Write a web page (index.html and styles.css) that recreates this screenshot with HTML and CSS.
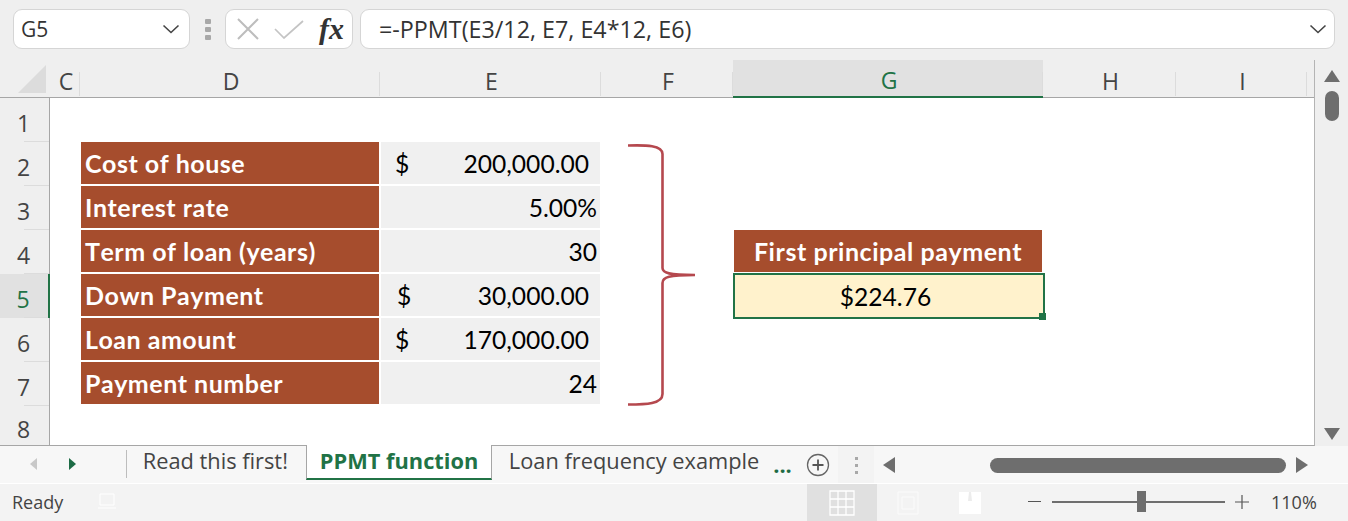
FILE: index.html
```html
<!DOCTYPE html>
<html lang="en">
<head>
<meta charset="utf-8">
<title>PPMT function</title>
<link rel="stylesheet" href="styles.css">
</head>
<body>
<div class="app">
  <header class="formula-bar">
    <div class="box name-box"><span>G5</span>
      <svg class="chev" width="18" height="10" viewBox="0 0 18 10"><path d="M1.500 1.500 9 8.500l7.500-7" fill="none" stroke="#444" stroke-width="1.600"/></svg>
    </div>
    <div class="grip"><i></i><i></i><i></i></div>
    <div class="box fx-box">
      <svg width="24" height="24" viewBox="0 0 24 24"><path d="M2 2l20 20M22 2 2 22" fill="none" stroke="#bdbdbd" stroke-width="2"/></svg>
      <svg width="30" height="20" viewBox="0 0 30 20"><path d="M1 10l9 9L29 2" fill="none" stroke="#c4c4c4" stroke-width="1.700"/></svg>
      <span class="fx">fx</span>
    </div>
    <div class="box formula-box"><span>=-PPMT(E3/12, E7, E4*12, E6)</span>
      <svg class="chev" width="18" height="10" viewBox="0 0 18 10"><path d="M1.500 1.500 9 8.500l7.500-7" fill="none" stroke="#444" stroke-width="1.600"/></svg>
    </div>
  </header>

  <section class="sheet-wrap">
    <div class="sheet">
      <div class="corner"><svg width="28" height="28" viewBox="0 0 28 28"><path d="M28 0V28H0Z" fill="#dcdcdc"/></svg></div>
      <div class="ch">C</div>
      <div class="ch">D</div>
      <div class="ch">E</div>
      <div class="ch">F</div>
      <div class="ch ch-active">G</div>
      <div class="ch">H</div>
      <div class="ch">I</div>
      <div class="ch ch-rest"></div>

      <div class="rh r1">1</div>
      <div class="rh r2">2</div>
      <div class="rh r3">3</div>
      <div class="rh r4">4</div>
      <div class="rh rh-active r5">5</div>
      <div class="rh r6">6</div>
      <div class="rh r7">7</div>
      <div class="rh r8">8</div>

      <div class="label r2">Cost of house</div>
      <div class="value r2"><span class="cur">$</span><span>200,000.00</span></div>
      <div class="label r3">Interest rate</div>
      <div class="value plain r3">5.00%</div>
      <div class="label r4">Term of loan (years)</div>
      <div class="value plain r4">30</div>
      <div class="label r5">Down Payment</div>
      <div class="value r5"><span class="cur cur-alt">$</span><span>30,000.00</span></div>
      <div class="label r6">Loan amount</div>
      <div class="value r6"><span class="cur">$</span><span>170,000.00</span></div>
      <div class="label r7">Payment number</div>
      <div class="value plain r7">24</div>

      <svg class="brace" width="132" height="264" viewBox="0 0 132 264"><path d="M27 3.500C45 3 61.500 3 61.500 12V126C61.500 131 68 133 94 133 68 133 61.500 135 61.500 141V252C61.500 262 45 262.500 27 262.500" fill="none" stroke="#b5484e" stroke-width="2.600"/></svg>

      <div class="result-head r4">First principal payment</div>
      <div class="result r5">$224.76<i class="handle"></i></div>
    </div>
    <aside class="vscroll">
      <svg width="16" height="12" viewBox="0 0 16 12"><path d="M8 0 16 12H0Z" fill="#6e6e6e"/></svg>
      <div class="vthumb"></div>
      <svg class="vdown" width="16" height="12" viewBox="0 0 16 12"><path d="M8 12 16 0H0Z" fill="#6e6e6e"/></svg>
    </aside>
  </section>

  <nav class="tabs">
    <div class="tab-nav">
      <svg width="7" height="12" viewBox="0 0 7 12"><path d="M7 0V12L0 6Z" fill="#c8c8c8"/></svg>
      <svg width="7" height="12" viewBox="0 0 7 12"><path d="M0 0V12L7 6Z" fill="#1d6b45"/></svg>
    </div>
    <div class="tab tab-first">Read this first!</div>
    <div class="tab tab-active">PPMT function</div>
    <div class="tab tab-last">Loan frequency example</div>
    <div class="more">...</div>
    <svg class="add" width="24" height="24" viewBox="0 0 24 24"><circle cx="12" cy="12" r="10.500" fill="none" stroke="#666" stroke-width="1.300"/><path d="M12 6.500v11M6.500 12h11" stroke="#555" stroke-width="1.800"/></svg>
    <div class="tab-grip"><i></i><i></i><i></i></div>
    <div class="hscroll">
      <svg width="12" height="16" viewBox="0 0 12 16"><path d="M0 8 12 0V16Z" fill="#6e6e6e"/></svg>
      <div class="hthumb"></div>
      <svg width="12" height="16" viewBox="0 0 12 16"><path d="M12 8 0 0V16Z" fill="#6e6e6e"/></svg>
    </div>
  </nav>

  <footer class="status">
    <span class="ready">Ready</span>
    <svg class="macro" width="20" height="18" viewBox="0 0 20 18"><path d="M3 1h14v11H3zM1 15h18" fill="none" stroke="#fff" stroke-width="1"/></svg>
    <div class="views">
      <div class="view view-on"><svg width="26" height="26" viewBox="0 0 26 26"><path d="M1 1h24v24H1zM9 1v24M17 1v24M1 9h24M1 17h24" fill="none" stroke="#fff" stroke-width="1.300"/></svg></div>
      <div class="view"><svg width="22" height="24" viewBox="0 0 22 24"><path d="M1 1h20v22H1zM5 6h12v12H5z" fill="none" stroke="#fbfbfb" stroke-width="1"/></svg></div>
      <div class="view"><svg width="24" height="24" viewBox="0 0 24 24"><path d="M1 1h22v22H1z" fill="#fff"/><path d="M11 1h2l1 9h-4z" fill="#ececec"/></svg></div>
    </div>
    <div class="zoom">
      <span class="minus"></span>
      <div class="track"><i class="thumb"></i></div>
      <svg width="14" height="14" viewBox="0 0 14 14"><path d="M7 0v14M0 7h14" stroke="#555" stroke-width="1.200"/></svg>
      <span class="pct">110%</span>
    </div>
  </footer>
</div>
</body>
</html>
```
FILE: styles.css
```css
* { box-sizing: border-box; }
html, body { margin: 0; height: 100%; }
body { background: #efefef; color: #333; font-family: "Open Sans", "Noto Sans", sans-serif; overflow: hidden; }
.app { width: 1348px; height: 521px; display: flex; flex-direction: column; overflow: hidden; }

/* formula bar */
.formula-bar { height: 60px; flex: none; display: flex; align-items: flex-start; padding: 9px 13px 0; }
.box { height: 40px; background: #fff; border: 1px solid #d5d5d5; border-radius: 9px; display: flex; align-items: center; color: #333; }
.name-box { width: 177px; justify-content: space-between; padding: 0 9px 0 7px; font-size: 21px; }
.grip { width: 35px; height: 40px; display: flex; flex-direction: column; align-items: center; justify-content: center; gap: 3px; }
.grip i { width: 6px; height: 5px; background: #a8a8a8; border-radius: 1px; }
.fx-box { width: 128px; padding: 0 0 0 10px; gap: 14px; }
.fx { font: italic bold 30px "Liberation Serif", serif; color: #333; margin-left: 1px; }
.formula-box { flex: 1; margin-left: 7px; justify-content: space-between; padding: 0 7px 0 18px; font-size: 23.300px; }

/* sheet */
.sheet-wrap { flex: none; height: 386px; display: flex; }
.sheet { width: 1315px; height: 386px; display: grid; grid-template-columns: 50px 30px 300px 221px 132px 310px 133px 131px 1fr; grid-template-rows: 38px repeat(7, 44px) 40px; background: linear-gradient(#efefef 38px, #fff 38px); border-right: 1px solid #b4b4b4; border-bottom: 1px solid #a6a6a6; overflow: hidden; }
.corner { display: flex; align-items: flex-end; justify-content: flex-end; padding: 0 4px 4px 0; border-bottom: 1px solid #a6a6a6; }
.ch { display: flex; align-items: center; justify-content: center; font-size: 23px; color: #444; border-bottom: 1px solid #a6a6a6; position: relative; padding: 4px 0 0 2px; }
.ch::after { content: ""; position: absolute; right: 0; top: 12px; bottom: 1px; width: 1px; background: #dcdcdc; }
.ch-rest::after { display: none; }
.ch-active { background: #e1e1e1; color: #217346; border-bottom: 2px solid #217346; }
.rh { grid-column: 1; display: flex; align-items: center; justify-content: center; font-size: 23px; color: #444; background: #efefef; border-right: 1px solid #a6a6a6; padding: 5px 2px 0 0; position: relative; }
.rh::after { content: ""; position: absolute; left: 24px; right: 0; bottom: 0; height: 1px; background: #dcdcdc; }
.rh-active { background: #e1e1e1; color: #217346; border-right: 2px solid #217346; }
.r1 { grid-row: 2; } .r2 { grid-row: 3; } .r3 { grid-row: 4; } .r4 { grid-row: 5; }
.r5 { grid-row: 6; } .r6 { grid-row: 7; } .r7 { grid-row: 8; } .r8 { grid-row: 9; }

.label { grid-column: 3; background: #a64d2d; color: #fff; font: 700 25px "Lato", sans-serif; font-kerning: none; letter-spacing: .5px; display: flex; align-items: center; padding-left: 4px; margin: 0 1px 2px 1px; }
.value { grid-column: 4; background: #f0f0f0; color: #000; font: 400 24.600px "Lato", sans-serif; display: flex; align-items: center; justify-content: space-between; padding: 0 11px 0 14px; margin: 0 1px 2px 1px; }
.cur-alt { margin-left: 2px; }
.plain { justify-content: flex-end; padding-right: 3px; }
.brace { grid-column: 5; grid-row: 3 / 9; display: block; }
.result-head { grid-column: 6; background: #a64d2d; color: #fff; font: 700 25px "Lato", sans-serif; font-kerning: none; letter-spacing: .55px; display: flex; align-items: center; justify-content: center; margin: 0 1px 2px 1px; }
.result { grid-column: 6; background: #fff2cc; color: #000; font: 400 24.600px "Lato", sans-serif; border: 2px solid #217346; display: flex; align-items: center; justify-content: center; margin: -1px -2px -1px 0; position: relative; padding-right: 7px; }
.handle { position: absolute; right: -3px; bottom: -3px; width: 7px; height: 7px; background: #217346; }

/* scrollbar */
.vscroll { flex: 1; display: flex; flex-direction: column; align-items: center; padding: 10px 0 6px; }
.vthumb { width: 14px; height: 30px; margin-top: 9px; border-radius: 7px; background: #6e6e6e; }
.vdown { margin-top: auto; }

/* tabs */
.tabs { flex: none; height: 38px; background: #f7f7f7; border-bottom: 1px solid #fff; display: flex; align-items: stretch; font-size: 21.800px; }
.tab-nav { width: 126px; display: flex; align-items: center; gap: 32px; padding: 0 0 2px 30px; }
.tab { display: flex; align-items: center; color: #444; padding-bottom: 8px; }
.tab-first { width: 181px; padding-left: 17px; position: relative; }
.tab-first::before { content: ""; position: absolute; left: 0; top: 4px; bottom: 5px; width: 1px; background: #bdbdbd; }
.tab-active { width: 186px; background: #fff; color: #217346; font-weight: 700; justify-content: center; height: 35px; margin-top: -1px; position: relative; border-bottom: 2px solid #217346; border-right: 1px solid #a6a6a6; border-left: 1px solid #a6a6a6; padding-bottom: 3px; }
.tab-last { width: 277px; padding-left: 17px; }
.more { color: #1d6b45; font-weight: 700; width: 38px; padding-left: 5px; display: flex; align-items: center; }
.add { align-self: center; flex: none; }
.tab-grip { width: 36px; margin-left: 8px; background: #f3f3f3; display: flex; flex-direction: column; align-items: center; justify-content: center; gap: 4px; padding-top: 2px; }
.tab-grip i { width: 3px; height: 3px; background: #a8a8a8; }
.hscroll { flex: 1; display: flex; align-items: center; padding: 1px 40px 0 9px; }
.hthumb { width: 296px; height: 15px; border-radius: 8px; background: #6e6e6e; margin: 0 10px 0 95px; }

/* status */
.status { flex: 1; background: #f3f3f3; display: flex; align-items: center; font-size: 18px; color: #444; padding-bottom: 2px; }
.ready { margin-left: 12px; width: 85px; }
.macro { flex: none; }
.views { display: flex; align-self: stretch; margin: 0 0 -2px 690px; }
.view { width: 70px; display: flex; align-items: center; justify-content: center; }
.view-on { background: #e0e0e0; }
.view + .view { width: 62px; }
.zoom { display: flex; align-items: center; margin-left: 27px; }
.minus { width: 13px; height: 1px; background: #555; }
.track { width: 173px; height: 2px; background: #6e6e6e; margin: 0 10px 0 11px; position: relative; }
.thumb { position: absolute; left: 85px; top: -10px; width: 9px; height: 21px; background: #6e6e6e; }
.pct { margin-left: 22px; }
```
